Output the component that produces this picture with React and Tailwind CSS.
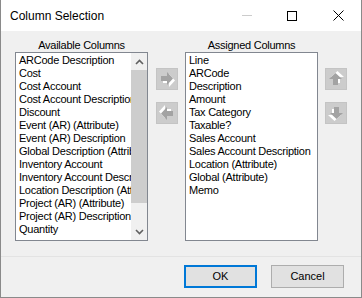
import React from 'react';

const AVAILABLE = [
  'ARCode Description',
  'Cost',
  'Cost Account',
  'Cost Account Description',
  'Discount',
  'Event (AR) (Attribute)',
  'Event (AR) Description',
  'Global Description (Attribute)',
  'Inventory Account',
  'Inventory Account Description',
  'Location Description (Attribute)',
  'Project (AR) (Attribute)',
  'Project (AR) Description',
  'Quantity',
];

const ASSIGNED = [
  'Line',
  'ARCode',
  'Description',
  'Amount',
  'Tax Category',
  'Taxable?',
  'Sales Account',
  'Sales Account Description',
  'Location (Attribute)',
  'Global (Attribute)',
  'Memo',
];

// disabled block arrow, drawn pointing right then rotated
function ArrowButton({ rotate }) {
  return (
    <div className="w-[22px] h-[22px] bg-[#cccccc] border border-[#c4c4c4] flex items-center justify-center">
      <svg width="20" height="20" viewBox="0 0 20 20" style={{ transform: `rotate(${rotate}deg)` }}>
        <polygon points="5,8 11,8 11,4 17,10.5 11,17 11,13 5,13" fill="#ffffff" transform="translate(1,1)" />
        <polygon points="4,7 10,7 10,3 16,9.5 10,16 10,12 4,12" fill="#a3a3a3" />
      </svg>
    </div>
  );
}

function ListBox({ items, scroll }) {
  return (
    <div className="w-[133px] h-[189px] bg-white border border-[#828790] flex overflow-hidden">
      <div className="flex-1 pt-[1px] pl-[3px] overflow-hidden">
        {items.map((it) => (
          <div key={it} className="h-[13px] leading-[13px] whitespace-nowrap text-black">{it}</div>
        ))}
      </div>
      {scroll && (
        <div className="w-[16px] bg-[#f0f0f0] flex flex-col">
          <div className="h-[17px] flex items-center justify-center">
            <svg width="9" height="6" viewBox="0 0 9 6"><polyline points="1,5 4.5,1.5 8,5" fill="none" stroke="#606060" strokeWidth="1.6" /></svg>
          </div>
          <div className="h-[133px] bg-[#cdcdcd]" />
          <div className="flex-1" />
          <div className="h-[17px] flex items-center justify-center">
            <svg width="9" height="6" viewBox="0 0 9 6"><polyline points="1,1 4.5,4.5 8,1" fill="none" stroke="#606060" strokeWidth="1.6" /></svg>
          </div>
        </div>
      )}
    </div>
  );
}

export default function App() {
  return (
    <div
      className="w-[362px] h-[298px] flex flex-col border-x border-b border-[#8a8a8a] text-[11px] tracking-[-0.25px] text-black"
      style={{ fontFamily: '"Liberation Sans", Arial, sans-serif' }}
    >
      {/* title bar */}
      <div className="h-[31px] bg-white flex items-center pl-[9px] shrink-0">
        <div className="text-[12px] tracking-normal flex-1">Column Selection</div>
        <div className="w-[10px] h-px bg-[#cccccc] mr-[35px]" />
        <div className="w-[10px] h-[10px] border border-black mr-[36px]" />
        <svg width="11" height="11" viewBox="0 0 11 11" className="mr-[17px]">
          <path d="M0.5 0.5 L10.5 10.5 M10.5 0.5 L0.5 10.5" stroke="#000" strokeWidth="1" />
        </svg>
      </div>

      {/* body */}
      <div className="flex-1 bg-[#f0f0f0] flex flex-col">
        <div className="flex pl-[14px] pt-[8px]">
          <div className="flex flex-col">
            <div className="h-[13px] leading-[13px] text-center">Available Columns</div>
            <ListBox items={AVAILABLE} scroll />
          </div>
          <div className="flex flex-col gap-[12px] pt-[29px] ml-[8px] mr-[7px]">
            <ArrowButton rotate={0} />
            <ArrowButton rotate={180} />
          </div>
          <div className="flex flex-col">
            <div className="h-[13px] leading-[13px] text-center">Assigned Columns</div>
            <ListBox items={ASSIGNED} />
          </div>
          <div className="flex flex-col gap-[12px] pt-[29px] ml-[7px]">
            <ArrowButton rotate={-90} />
            <ArrowButton rotate={90} />
          </div>
        </div>

        <div className="mt-[15px] h-px bg-[#e3e3e3]" />

        <div className="flex justify-end gap-[14px] pt-[8px] pr-[17px]">
          <button className="w-[73px] h-[23px] bg-[#e1e1e1] border-2 border-[#0078d7] flex items-center justify-center tracking-normal">OK</button>
          <button className="w-[73px] h-[23px] bg-[#e1e1e1] border border-[#adadad] flex items-center justify-center tracking-normal">Cancel</button>
        </div>
      </div>
    </div>
  );
}
